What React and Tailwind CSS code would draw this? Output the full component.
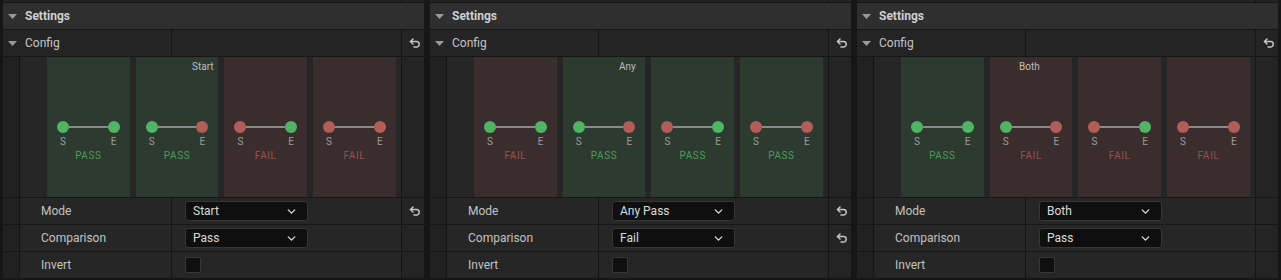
import React from 'react';
import { ChevronDown } from 'lucide-react';

const PANELS = [
  { tag: 'Start', tagPos: 'left-[172px]', results: [true, true, false, false], mode: 'Start', cmp: 'Pass', resetMode: true, resetCmp: false },
  { tag: 'Any', tagPos: 'left-[172px]', results: [false, true, true, true], mode: 'Any Pass', cmp: 'Fail', resetMode: true, resetCmp: true },
  { tag: 'Both', tagPos: 'left-[145px]', results: [true, false, false, false], mode: 'Both', cmp: 'Pass', resetMode: false, resetCmp: false },
];

// start / end dot colour for each of the four cases
const CASES = [
  ['g', 'g'],
  ['g', 'r'],
  ['r', 'g'],
  ['r', 'r'],
];

const Triangle = () => (
  <svg width="9" height="5" viewBox="0 0 9 5" className="shrink-0">
    <polygon points="0,0 9,0 4.5,5" fill="#9a9a9a" />
  </svg>
);

const ResetIcon = () => (
  <svg width="12" height="11" viewBox="0 0 12 11" fill="none" stroke="#c4c4c4" strokeWidth="1.5" strokeLinecap="round" strokeLinejoin="round">
    <path d="M4 1 1.5 3.5 4 6" />
    <path d="M1.5 3.5H7.5a2.75 2.75 0 0 1 0 5.5H5" />
  </svg>
);

const Dot = ({ c }) => (
  <div className={`w-[12px] h-[12px] rounded-full shrink-0 ${c === 'g' ? 'bg-[#4fb463]' : 'bg-[#b25d58]'}`} />
);

const Card = ({ pass, dots }) => (
  <div className={`w-[82.7px] h-full flex flex-col pt-[64px] ${pass ? 'bg-[#2c3a2f]' : 'bg-[#392e2d]'}`}>
    <div className="flex items-center px-[10px]">
      <Dot c={dots[0]} />
      <div className="flex-1 h-[2px] bg-[#8a8a8a]" />
      <Dot c={dots[1]} />
    </div>
    <div className="flex justify-between px-[10px] mt-[3px] text-[10px] leading-[12px] text-[#9c9c9c]">
      <span className="w-[12px] text-center">S</span>
      <span className="w-[12px] text-center">E</span>
    </div>
    <div className={`mt-[2px] text-center text-[10px] leading-[12px] tracking-[0.6px] ${pass ? 'text-[#4c9a5b]' : 'text-[#9a5151]'}`}>
      {pass ? 'PASS' : 'FAIL'}
    </div>
  </div>
);

const Dropdown = ({ value }) => (
  <div className="w-[123px] h-[20px] rounded-[3px] bg-[#0f0f0f] border border-[#363636] flex items-center justify-between pl-[7px] pr-[9px] text-[12px] text-[#dcdcdc]">
    <span>{value}</span>
    <ChevronDown size={13} strokeWidth={2.6} color="#d8d8d8" />
  </div>
);

const PropRow = ({ label, children, reset }) => (
  <div className="h-[26px] flex gap-px">
    <div className="w-[16px] bg-[#212121]" />
    <div className="w-[151px] bg-[#262626] flex items-center pl-[21px] text-[12px] text-[#c2c2c2]">{label}</div>
    <div className="flex-1 bg-[#262626] flex items-center pl-[13px]">{children}</div>
    <div className="w-[22px] bg-[#242424] flex items-center justify-center pl-[4px]">{reset && <ResetIcon />}</div>
  </div>
);

const Panel = ({ p }) => (
  <div className="flex-1 flex flex-col gap-px">
    <div className="h-[2px] flex gap-px">
      <div className="flex-1 bg-[#232323]" />
      <div className="w-[22px] bg-[#232323]" />
    </div>
    <div className="h-[26px] bg-[#2f2f2f] flex items-center gap-[8px] pl-[5px] text-[12px] font-bold text-[#cfcfcf]">
      <Triangle />
      <span>Settings</span>
    </div>
    <div className="h-[26px] flex gap-px">
      <div className="w-[168px] bg-[#242424] flex items-center gap-[8px] pl-[5px] text-[12px] text-[#c6c6c6]">
        <Triangle />
        <span>Config</span>
      </div>
      <div className="flex-1 bg-[#242424]" />
      <div className="w-[22px] bg-[#242424] flex items-center justify-center pl-[4px]">
        <ResetIcon />
      </div>
    </div>
    <div className="h-[140px] flex gap-px">
      <div className="w-[16px] bg-[#212121]" />
      <div className="relative flex-1 bg-[#262626] flex gap-[6px] pl-[27px]">
        {p.results.map((r, i) => (
          <Card key={i} pass={r} dots={CASES[i]} />
        ))}
        <span className={`absolute top-[3px] ${p.tagPos} text-[10px] leading-[14px] text-[#bdbdbd]`}>{p.tag}</span>
      </div>
      <div className="w-[22px] bg-[#242424]" />
    </div>
    <PropRow label="Mode" reset={p.resetMode}>
      <Dropdown value={p.mode} />
    </PropRow>
    <PropRow label="Comparison" reset={p.resetCmp}>
      <Dropdown value={p.cmp} />
    </PropRow>
    <PropRow label="Invert">
      <div className="w-[16px] h-[16px] rounded-[2px] bg-[#0f0f0f] border border-[#363636]" />
    </PropRow>
  </div>
);

export default function App() {
  return (
    <div className="w-[1281px] h-[280px] bg-[#161616] flex gap-[6px] px-[3px] overflow-hidden font-['Roboto',sans-serif]">
      {PANELS.map((p, i) => (
        <Panel key={i} p={p} />
      ))}
    </div>
  );
}
